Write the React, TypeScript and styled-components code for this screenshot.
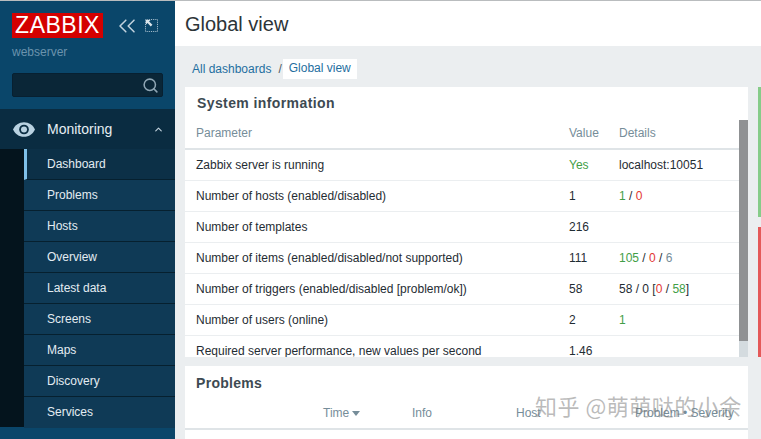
import React from 'react';
import styled, {createGlobalStyle} from 'styled-components';
import {ChevronUp, ChevronsLeft, Search} from 'lucide-react';

const GlobalStyle = createGlobalStyle`
  html, body {
    margin: 0;
    padding: 0;
    width: 761px;
    height: 439px;
    overflow: hidden;
    background: #ebeef0;
    font-family: "Liberation Sans", Arial, sans-serif;
    font-size: 12px;
    color: #1f2c33;
  }
  * { box-sizing: border-box; }
`;

const menuItems = ['Dashboard', 'Problems', 'Hosts', 'Overview', 'Latest data', 'Screens', 'Maps', 'Discovery', 'Services'];

type Tone = 'green' | 'red' | 'grey';
type Part = string | {text: string; tone: Tone};

const rows: {name: string; value: Part; details: Part[]}[] = [
  {name: 'Zabbix server is running', value: {text: 'Yes', tone: 'green'}, details: ['localhost:10051']},
  {name: 'Number of hosts (enabled/disabled)', value: '1', details: [{text: '1', tone: 'green'}, ' / ', {text: '0', tone: 'red'}]},
  {name: 'Number of templates', value: '216', details: []},
  {
    name: 'Number of items (enabled/disabled/not supported)',
    value: '111',
    details: [{text: '105', tone: 'green'}, ' / ', {text: '0', tone: 'red'}, ' / ', {text: '6', tone: 'grey'}],
  },
  {
    name: 'Number of triggers (enabled/disabled [problem/ok])',
    value: '58',
    details: ['58 / 0 [', {text: '0', tone: 'red'}, ' / ', {text: '58', tone: 'green'}, ']'],
  },
  {name: 'Number of users (online)', value: '2', details: [{text: '1', tone: 'green'}]},
  {name: 'Required server performance, new values per second', value: '1.46', details: []},
];

const renderPart = (part: Part, key: number) =>
  typeof part === 'string' ? <span key={key}>{part}</span> : <Colored key={key} $tone={part.tone}>{part.text}</Colored>;

export default function App() {
  return (
    <>
      <GlobalStyle />
      <Page>
        <Sidebar>
          <Brand>
            <BrandRow>
              <Logo>ZABBIX</Logo>
              <ChevronsLeft size={28} strokeWidth={1.3} color="#c3d3de" />
              <KioskIcon viewBox="0 0 14 14">
                <rect x="0.5" y="0.5" width="13" height="13" fill="none" stroke="#c3d3de" strokeDasharray="1 1" />
                <path d="M1 1h5L4.4 2.8 8 6.2 6.2 8 2.8 4.4 1 6z" fill="#dbe5eb" />
              </KioskIcon>
            </BrandRow>
            <ServerName>webserver</ServerName>
            <SearchBox>
              <Search size={17} strokeWidth={2.2} color="#8fa6b4" />
            </SearchBox>
          </Brand>
          <MonitoringRow>
            <EyeIcon viewBox="0 0 24 16">
              <path d="M12 0C6.5 0 2.2 3.3 0 8c2.2 4.7 6.5 8 12 8s9.800-3.300 12-8c-2.200-4.700-6.500-8-12-8z" fill="#b9d2e1" />
              <circle cx="12" cy="8" r="5.300" fill="#0a2c41" />
              <circle cx="12" cy="8" r="3.300" fill="#b9d2e1" />
            </EyeIcon>
            <MonitoringLabel>Monitoring</MonitoringLabel>
            <ChevronUp size={11} strokeWidth={2.500} color="#c3d3de" />
          </MonitoringRow>
          <SubMenu>
            {menuItems.map((item, i) => (
              <MenuItem key={item} $active={i === 0}>{item}</MenuItem>
            ))}
          </SubMenu>
        </Sidebar>

        <Main>
          <Header>Global view</Header>
          <Content>
            <Breadcrumbs>
              <CrumbLink>All dashboards</CrumbLink>
              <CrumbSep>/</CrumbSep>
              <CrumbCurrent>Global view</CrumbCurrent>
            </Breadcrumbs>
            <WidgetGrid>
              <LeftColumn>
                <InfoCard>
                  <CardTitle>System information</CardTitle>
                  <CardBody>
                    <InfoTable>
                      <TableHead>
                        <ParamCol>Parameter</ParamCol>
                        <ValueCol>Value</ValueCol>
                        <span>Details</span>
                      </TableHead>
                      {rows.map(row => (
                        <TableRow key={row.name}>
                          <ParamCol>{row.name}</ParamCol>
                          <ValueCol>{renderPart(row.value, 0)}</ValueCol>
                          <span>{row.details.map(renderPart)}</span>
                        </TableRow>
                      ))}
                    </InfoTable>
                    <ScrollTrack>
                      <ScrollThumb />
                    </ScrollTrack>
                  </CardBody>
                </InfoCard>
                <ProblemsCard>
                  <ProblemsTitle>Problems</ProblemsTitle>
                  <ProblemsHead>
                    <TimeCol>Time <SortArrow /></TimeCol>
                    <InfoCol>Info</InfoCol>
                    <HostCol>Host</HostCol>
                    <ProblemCol>Problem • Severity</ProblemCol>
                  </ProblemsHead>
                </ProblemsCard>
              </LeftColumn>
              <RightColumn>
                <StatusBar $color="#86cc89" />
                <StatusBar $color="#e45959" />
              </RightColumn>
            </WidgetGrid>
          </Content>
        </Main>
        <Watermark>知乎 @萌萌哒的小余</Watermark>
      </Page>
    </>
  );
}

const Page = styled.div`
  position: relative;
  display: flex;
  width: 761px;
  height: 439px;
  overflow: hidden;
  border-top: 1px solid #b9bcbe;
`;

const Sidebar = styled.aside`
  display: flex;
  flex-direction: column;
  flex: 0 0 175px;
  background: #0a466a;
`;

const Brand = styled.div`
  display: flex;
  flex-direction: column;
  height: 108px;
  padding: 12px 12px 0;
`;

const BrandRow = styled.div`
  display: flex;
  align-items: center;
  height: 25px;
`;

const Logo = styled.div`
  width: 91px;
  height: 25px;
  margin-right: 10px;
  background: #d40000;
  color: #fff;
  font-size: 23px;
  line-height: 25px;
  text-align: center;
  letter-spacing: 0.5px;
`;

const KioskIcon = styled.svg`
  width: 13px;
  height: 13px;
  margin-left: 4px;
`;

const ServerName = styled.div`
  margin-top: 7px;
  color: #6b93ad;
  font-size: 12px;
  line-height: 14px;
`;

const SearchBox = styled.div`
  display: flex;
  align-items: center;
  justify-content: flex-end;
  width: 151px;
  height: 24px;
  margin-top: 14px;
  padding-right: 3px;
  background: #0a2637;
  border: 1px solid #072031;
  border-radius: 2px;
`;

const MonitoringRow = styled.div`
  display: flex;
  align-items: center;
  height: 40px;
  padding: 0 11px 0 13px;
  background: #0a2c41;
`;

const EyeIcon = styled.svg`
  width: 22px;
  height: 15px;
`;

const MonitoringLabel = styled.span`
  flex: 1;
  margin-left: 12px;
  color: #e6eef3;
  font-size: 14px;
`;

const SubMenu = styled.nav`
  display: flex;
  flex-direction: column;
  height: 278px;
  padding-left: 24px;
  background: #04141d;
`;

const MenuItem = styled.a<{$active?: boolean}>`
  display: flex;
  align-items: center;
  flex: 0 0 31px;
  padding-left: ${p => (p.$active ? '20px' : '23px')};
  background: ${p => (p.$active ? '#0c3047' : '#0f3a56')};
  border-left: ${p => (p.$active ? '3px solid #7fc0e8' : '0')};
  border-bottom: 1px solid #06202f;
  color: #e3ecf2;
  font-size: 12px;

  &:last-child {
    border-bottom-color: #0f3a56;
  }
`;

const Main = styled.main`
  display: flex;
  flex-direction: column;
  flex: 1;
  min-width: 0;
`;

const Header = styled.header`
  flex: 0 0 45px;
  min-height: 0;
  height: 45px;
  padding-left: 10px;
  background: #fff;
  color: #2c3438;
  font-size: 20px;
  line-height: 46px;
`;

const Content = styled.div`
  flex: 1;
  padding: 13px 0 0 10px;
  background: #ebeef0;
`;

const Breadcrumbs = styled.div`
  display: flex;
  align-items: center;
  height: 20px;
  margin-bottom: 8px;
  padding-left: 7px;
`;

const CrumbLink = styled.span`
  color: #1f6fa0;
`;

const CrumbSep = styled.span`
  margin: 0 1px 0 7px;
  color: #4d5a61;
`;

const CrumbCurrent = styled.span`
  height: 20px;
  padding: 0 6px;
  background: #fff;
  color: #1f6fa0;
  line-height: 19px;
`;

const WidgetGrid = styled.div`
  display: flex;
  gap: 10px;
`;

const LeftColumn = styled.div`
  display: flex;
  flex-direction: column;
  flex: 0 0 563px;
  gap: 9px;
`;

const RightColumn = styled.div`
  display: flex;
  flex-direction: column;
  flex: 1;
  gap: 10px;
`;

const StatusBar = styled.div<{$color: string}>`
  height: 130px;
  background: ${p => p.$color};
`;

const InfoCard = styled.section`
  display: flex;
  flex-direction: column;
  height: 270px;
  overflow: hidden;
  background: #fff;
`;

const CardTitle = styled.h4`
  flex: 0 0 31px;
  margin: 0;
  padding-left: 12px;
  color: #3d4a52;
  font-size: 14px;
  font-weight: bold;
  line-height: 32px;
  letter-spacing: 0.4px;
`;

const CardBody = styled.div`
  display: flex;
  flex: 1;
  min-height: 0;
`;

const InfoTable = styled.div`
  flex: 1;
  min-width: 0;
  overflow: hidden;
`;

const TableHead = styled.div`
  display: flex;
  align-items: center;
  height: 31px;
  padding: 0 0 1px 11px;
  border-bottom: 2px solid #dfe4e7;
  color: #768d99;
`;

const TableRow = styled.div`
  display: flex;
  align-items: center;
  flex: 0 0 31px;
  height: 31px;
  padding-left: 11px;
  border-bottom: 1px solid #ebeef0;
  color: #1f2c33;
`;

const ParamCol = styled.span`
  flex: 0 0 373px;
`;

const ValueCol = styled.span`
  flex: 0 0 50px;
`;

const Colored = styled.span<{$tone: Tone}>`
  color: ${p => (p.$tone === 'green' ? '#429e47' : p.$tone === 'red' ? '#e33734' : '#768d99')};
`;

const ScrollTrack = styled.div`
  flex: 0 0 9px;
  margin-top: 1px;
  background: #d4dbdf;
`;

const ScrollThumb = styled.div`
  height: 221px;
  background: #8f9193;
`;

const ProblemsCard = styled.section`
  height: 80px;
  background: #fff;
`;

const ProblemsTitle = styled.h4`
  margin: 0;
  padding: 9px 0 0 11px;
  color: #3d4a52;
  font-size: 14px;
  font-weight: bold;
  line-height: 16px;
  letter-spacing: 0.3px;
`;

const ProblemsHead = styled.div`
  display: flex;
  align-items: center;
  height: 31px;
  margin-top: 8px;
  padding: 0 0 1px 138px;
  border-bottom: 2px solid #dfe4e7;
  color: #768d99;
`;

const TimeCol = styled.span`
  display: inline-flex;
  align-items: center;
  gap: 3px;
  flex: 0 0 89px;
`;

const InfoCol = styled.span`
  flex: 0 0 104px;
`;

const HostCol = styled.span`
  flex: 0 0 119px;
`;

const ProblemCol = styled.span`
  white-space: nowrap;
`;

const SortArrow = styled.i`
  width: 0;
  height: 0;
  border-left: 4px solid transparent;
  border-right: 4px solid transparent;
  border-top: 5px solid #768d99;
`;

const Watermark = styled.div`
  position: absolute;
  left: 535px;
  top: 390px;
  color: rgba(120, 120, 120, 0.5);
  font-family: "Noto Sans CJK SC", "Liberation Sans", sans-serif;
  font-size: 22px;
  line-height: 28px;
  letter-spacing: 0.5px;
  white-space: nowrap;
`;
